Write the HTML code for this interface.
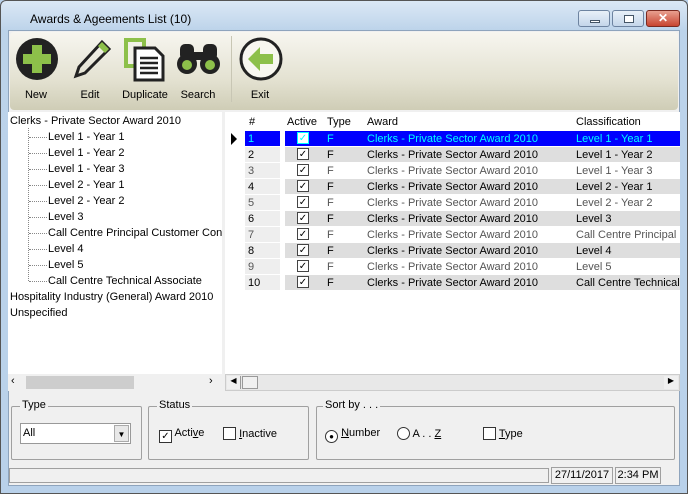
<!DOCTYPE html>
<html><head><style>
*{margin:0;padding:0;box-sizing:border-box}
body{width:688px;height:494px;background:#b9d1ea;font-family:"Liberation Sans",sans-serif;font-size:11px;position:relative;overflow:hidden}
.a{position:absolute}
.win{left:0;top:0;width:688px;height:494px;border:1px solid #555;border-radius:6px 6px 0 0;background:linear-gradient(#dbe8f5,#bcd3ea 30px,#b9d1ea)}
.client{left:8px;top:30px;width:672px;height:456px;background:#f0f0f0;border:1px solid #8ea4bd}
.tb{left:10px;top:32px;width:668px;height:78px;background:linear-gradient(#f7f6f0,#e4e2d2 60%,#cfcdb6);border-radius:4px}
.lbl{font-size:11px;color:#000;text-align:center;width:60px}
.row{position:absolute;left:245px;width:435px;height:16px;font-size:11px;line-height:16px;color:#000}
.row span{position:absolute}
.gb{border:1px solid #a0a0a0;border-radius:2px}
.gbt{position:absolute;top:-8px;background:#f0f0f0;padding:0 2px;font-size:11px}
.cb{display:inline-block;width:13px;height:13px;border:1px solid #333;background:#fff;vertical-align:-3px;text-align:center;font-size:10px;line-height:11px}
.tr{position:relative;padding-left:38px}
.tr:before{content:"";position:absolute;left:19px;top:8px;width:18px;border-top:1px dotted #888}
</style></head><body>
<div class="a win"></div>
<div class="a" style="left:30px;top:12px;font-size:12px">Awards &amp; Ageements List (10)</div>
<div class="a" style="left:578px;top:10px;width:32px;height:17px;border:1px solid #6d83a0;border-radius:3px;background:linear-gradient(#e8f0f8,#c4d6ea)"><div class="a" style="left:11px;top:9px;width:10px;height:3px;background:#fff;border:1px solid #456"></div></div>
<div class="a" style="left:612px;top:10px;width:32px;height:17px;border:1px solid #6d83a0;border-radius:3px;background:linear-gradient(#e8f0f8,#c4d6ea)"><div class="a" style="left:11px;top:4px;width:10px;height:8px;background:#fff;border:1px solid #456"></div></div>
<div class="a" style="left:646px;top:10px;width:34px;height:17px;border:1px solid #7a2a20;border-radius:3px;background:linear-gradient(#e8a090,#c84530);color:#fff;font-weight:bold;text-align:center;font-size:12px;line-height:15px">✕</div>
<div class="a client"></div>
<div class="a tb"></div>
<svg class="a" style="left:14px;top:36px" width="46" height="46"><circle cx="23" cy="23" r="21" fill="#222"/><path d="M18 9h10v9h9v10h-9v9H18v-9H9V18h9z" fill="#8dc04a"/></svg>
<svg class="a" style="left:68px;top:36px" width="46" height="46"><path d="M34 6l7 7-24 24-9 3 3-9z" fill="none" stroke="#222" stroke-width="3"/><path d="M34 6l7 7-4 4-7-7z" fill="#8dc04a"/></svg>
<svg class="a" style="left:122px;top:36px" width="46" height="46"><rect x="2" y="2" width="22" height="30" fill="#8dc04a"/><rect x="6" y="6" width="14" height="22" fill="#f2f1e8"/><path d="M13 12h20l8 8v24H13z" fill="#fff" stroke="#222" stroke-width="3"/><path d="M18 22h18M18 27h18M18 32h18M18 37h18" stroke="#222" stroke-width="2.5"/></svg>
<svg class="a" style="left:176px;top:38px" width="46" height="44"><circle cx="11" cy="26" r="10" fill="#222"/><circle cx="34" cy="26" r="10" fill="#222"/><rect x="4" y="6" width="14" height="16" rx="5" fill="#222"/><rect x="27" y="6" width="14" height="16" rx="5" fill="#222"/><rect x="16" y="14" width="13" height="8" fill="#222"/><circle cx="11" cy="27" r="5" fill="#8dc04a"/><circle cx="34" cy="27" r="5" fill="#8dc04a"/></svg>
<div class="a" style="left:231px;top:36px;width:1px;height:66px;background:#c8c6b4"></div>
<svg class="a" style="left:238px;top:36px" width="46" height="46"><circle cx="23" cy="23" r="20" fill="#f8f7f0" stroke="#222" stroke-width="3"/><path d="M22 11L10 23l12 12v-7h13v-10H22z" fill="#8dc04a"/></svg>
<div class="a lbl" style="left:6px;top:89px">New</div>
<div class="a lbl" style="left:60px;top:89px">Edit</div>
<div class="a lbl" style="left:115px;top:89px">Duplicate</div>
<div class="a lbl" style="left:168px;top:89px">Search</div>
<div class="a lbl" style="left:230px;top:89px">Exit</div>
<div class="a" style="left:8px;top:112px;width:214px;height:262px;background:#fff;overflow:hidden">
<div class="a" style="left:20px;top:16px;width:1px;height:153px;border-left:1px dotted #888"></div>
<div class="a" style="left:2px;top:1px;line-height:16px;white-space:nowrap">
<div>Clerks - Private Sector Award 2010</div>
<div class="tr">Level 1 - Year 1</div>
<div class="tr">Level 1 - Year 2</div>
<div class="tr">Level 1 - Year 3</div>
<div class="tr">Level 2 - Year 1</div>
<div class="tr">Level 2 - Year 2</div>
<div class="tr">Level 3</div>
<div class="tr">Call Centre Principal Customer Contact</div>
<div class="tr">Level 4</div>
<div class="tr">Level 5</div>
<div class="tr">Call Centre Technical Associate</div>
<div>Hospitality Industry (General) Award 2010</div><div>Unspecified</div></div></div>
<div class="a" style="left:8px;top:374px;width:214px;height:17px;background:#f0f0f0"><div class="a" style="left:18px;top:2px;width:108px;height:13px;background:#cdcdcd"></div><span class="a" style="left:3px;top:1px">‹</span><span class="a" style="left:201px;top:1px">›</span></div>
<div class="a" style="left:225px;top:112px;width:455px;height:262px;background:#fff"></div>
<div class="row" style="top:114px"><span style="left:4px">#</span><span style="left:42px">Active</span><span style="left:82px">Type</span><span style="left:122px">Award</span><span style="left:331px">Classification</span></div>
<div class="a" style="left:231px;top:133px;width:0;height:0;border-left:6px solid #000;border-top:6px solid transparent;border-bottom:6px solid transparent"></div>
<div id="rows"></div>
<div class="a" style="left:225px;top:374px;width:455px;height:17px;background:#e8e8e8;border:1px solid #ccc"><div class="a" style="left:1px;top:1px;width:14px;height:13px;background:#f0f0f0;border-right:1px solid #999;font-size:8px;text-align:center">◀</div><div class="a" style="left:16px;top:1px;width:16px;height:13px;background:#f0f0f0;border:1px solid #999"></div><div class="a" style="right:1px;top:1px;width:14px;height:13px;background:#f0f0f0;font-size:8px;text-align:center">▶</div></div>
<div class="a gb" style="left:11px;top:406px;width:131px;height:54px"><span class="gbt" style="left:8px">Type</span>
<div class="a" style="left:8px;top:16px;width:111px;height:21px;background:#fff;border:1px solid #999"><span class="a" style="left:2px;top:3px">All</span><div class="a" style="right:1px;top:1px;width:15px;height:17px;background:#e8e8e8;border:1px solid #aaa;font-size:8px;text-align:center;line-height:17px">▼</div></div></div>
<div class="a gb" style="left:148px;top:406px;width:161px;height:54px"><span class="gbt" style="left:8px">Status</span>
<div class="a" style="left:10px;top:20px"><span class="cb">✓</span> Acti<u>v</u>e</div><div class="a" style="left:74px;top:20px"><span class="cb"></span> <u>I</u>nactive</div></div>
<div class="a gb" style="left:316px;top:406px;width:359px;height:54px"><span class="gbt" style="left:6px">Sort by . . .</span>
<div class="a" style="left:8px;top:20px"><span class="cb" style="border-radius:7px;font-size:8px">●</span> <u>N</u>umber</div><div class="a" style="left:80px;top:20px"><span class="cb" style="border-radius:7px"></span> A . . <u>Z</u></div><div class="a" style="left:166px;top:20px"><span class="cb"></span> <u>T</u>ype</div></div>
<div class="a" style="left:9px;top:468px;width:540px;height:15px;border:1px solid #a0a0a0"></div>
<div class="a" style="left:551px;top:467px;width:62px;height:17px;border:1px solid #a0a0a0;font-size:11px;text-align:center;line-height:15px">27/11/2017</div>
<div class="a" style="left:615px;top:467px;width:46px;height:17px;border:1px solid #a0a0a0;font-size:11px;text-align:center;line-height:15px">2:34 PM</div>
<script>
var cl=["Level 1 - Year 1","Level 1 - Year 2","Level 1 - Year 3","Level 2 - Year 1","Level 2 - Year 2","Level 3","Call Centre Principal","Level 4","Level 5","Call Centre Technical"],h="";
for(var i=0;i<10;i++){var t=131+i*16,sel=i==0,alt=i%2==1,c=sel?"#0ff":(i%2==0?"#555":"#000"),bg=sel?"#0000ff":(alt?"#dedede":"#fff");
h+='<div class="row" style="top:'+t+'px;color:'+c+'"><div class="a" style="left:0;top:0;width:35px;height:15px;background:'+(sel?"#0000ff":"#eee")+'"></div><div class="a" style="left:40px;top:0;width:395px;height:15px;background:'+bg+'"></div><span style="left:3px">'+(i+1)+'</span><span class="cb" style="left:52px;top:1px;height:12px;width:12px;border-color:'+(sel?"#0ff":"#444")+';color:'+(sel?"#0ff":"#000")+'">✓</span><span style="left:82px">F</span><span style="left:122px">Clerks - Private Sector Award 2010</span><span style="left:331px;white-space:nowrap;width:104px;overflow:hidden">'+cl[i]+'</span></div>';}
document.getElementById("rows").innerHTML=h;
</script>
</body></html>
